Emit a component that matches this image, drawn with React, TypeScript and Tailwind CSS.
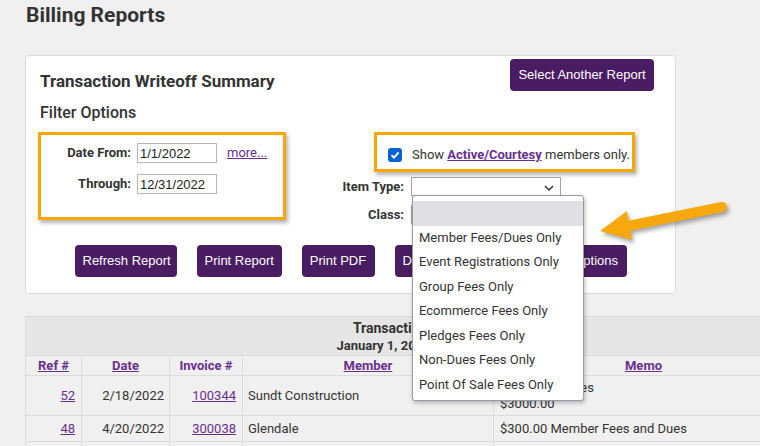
import React from "react";

const btn =
  "h-[32px] px-2 rounded-[4px] bg-[#4a1c62] text-white text-[13px] font-['Liberation_Sans',Arial,sans-serif] leading-[32px] whitespace-nowrap";

const label = "text-[13px] font-bold text-[#333] text-right leading-[20px]";
const link = "text-[#6a2e8f] underline";

const items = [
  "",
  "Member Fees/Dues Only",
  "Event Registrations Only",
  "Group Fees Only",
  "Ecommerce Fees Only",
  "Pledges Fees Only",
  "Non-Dues Fees Only",
  "Point Of Sale Fees Only",
];

function Chevron() {
  return (
    <svg width="10" height="6" viewBox="0 0 10 6" className="absolute right-[6px] top-[7px]">
      <polyline points="1,1 5,5 9,1" fill="none" stroke="#333" strokeWidth="1.5" />
    </svg>
  );
}

export default function App() {
  return (
    <div className="relative w-[760px] h-[446px] overflow-hidden bg-[#f0f0f0] text-[#333] font-['Roboto',sans-serif]">
      <h1 className="pl-[26px] pt-[2px] text-[21px] leading-[26px] font-bold text-[#333]">Billing Reports</h1>

      <div className="mt-[27px] ml-[25px] w-[651px] h-[239px] bg-white border border-[#dcdcdc] rounded-[4px] relative z-10">
        <div className="flex justify-between pl-[14px] pr-[21px] pt-[3px]">
          <div>
            <div className="mt-[12px] text-[17px] leading-[20px] font-bold">Transaction Writeoff Summary</div>
            <div className="mt-[12px] text-[16px] leading-[20px] font-medium">Filter Options</div>
          </div>
          <button className={`${btn} w-[144px] px-0`}>Select Another Report</button>
        </div>

        <div className="flex mt-[9px]">
          <div className="ml-[12px] w-[248px] h-[88px] border-[3px] border-[#f6a800] shadow-[2px_3px_4px_rgba(0,0,0,0.3)]">
            <div className="flex items-center mt-[8px] h-[20px]">
              <div className={`${label} w-[90px]`}>Date From:</div>
              <input
                readOnly
                value="1/1/2022"
                className="ml-[6px] w-[80px] h-[20px] border border-[#b5b5b5] px-[2px] text-[13px] text-[#222] font-['Liberation_Sans',Arial,sans-serif] outline-none"
              />
              <span className={`${link} ml-[10px] text-[13px]`}>more...</span>
            </div>
            <div className="flex items-center mt-[11px] h-[20px]">
              <div className={`${label} w-[90px]`}>Through:</div>
              <input
                readOnly
                value="12/31/2022"
                className="ml-[6px] w-[80px] h-[20px] border border-[#b5b5b5] px-[2px] text-[13px] text-[#222] font-['Liberation_Sans',Arial,sans-serif] outline-none"
              />
            </div>
          </div>

          <div className="ml-[44px]">
            <div className="ml-[44px] w-[261px] h-[40px] border-[3px] border-[#f6a800] shadow-[2px_3px_4px_rgba(0,0,0,0.3)] flex items-center pl-[11px] pt-[6px]">
              <span className="w-[14px] h-[14px] rounded-[3px] bg-[#0b62d6] flex items-center justify-center">
                <svg width="10" height="10" viewBox="0 0 10 10">
                  <polyline points="1.5,5.2 4,7.6 8.6,2.4" fill="none" stroke="#fff" strokeWidth="1.8" />
                </svg>
              </span>
              <span className="ml-[10px] text-[13px] leading-[20px] text-[#333] whitespace-nowrap">
                Show <span className="font-bold text-[#6a2e8f] underline">Active/Courtesy</span> members only.
              </span>
            </div>
            <div className="flex items-center mt-[5px] h-[19px]">
              <div className={`${label} w-[74px]`}>Item Type:</div>
              <div className="relative ml-[7px] w-[150px] h-[19px] border border-[#a3a3a3] bg-white">
                <Chevron />
                <div className="absolute left-[0px] top-[17px] w-[172px] h-[206px] bg-white border border-[#9a9aa4] rounded-[3px] shadow-[1px_2px_4px_rgba(0,0,0,0.25)] pt-[5px] z-20">
                  {items.map((t, i) => (
                    <div
                      key={i}
                      className={`h-[24.5px] leading-[24.5px] pl-[6px] text-[13px] text-[#333] whitespace-nowrap ${
                        i === 0 ? "bg-[#dfdfe4]" : ""
                      }`}
                    >
                      {t}
                    </div>
                  ))}
                </div>
              </div>
            </div>
            <div className="flex items-center mt-[9px] h-[19px]">
              <div className={`${label} w-[74px]`}>Class:</div>
              <div className="relative ml-[7px] w-[150px] h-[19px] border border-[#a3a3a3] bg-white">
                <Chevron />
              </div>
            </div>
          </div>
        </div>

        <div className="flex justify-center gap-[20px] mt-[21px]">
          <button className={`${btn} w-[102px] px-0`}>Refresh Report</button>
          <button className={`${btn} w-[85px] px-0`}>Print Report</button>
          <button className={`${btn} w-[73px] px-0`}>Print PDF</button>
          <button className={`${btn} w-[109px] px-0`}>Download Excel</button>
          <button className={`${btn} w-[103px] px-0`}>Export Options</button>
        </div>
      </div>

      <table className="mt-[22px] ml-[25px] w-[848px] border-collapse text-[13px] text-[#333] table-fixed">
        <colgroup>
          <col className="w-[56px]" />
          <col className="w-[88px]" />
          <col className="w-[73px]" />
          <col className="w-[251px]" />
          <col className="w-[300px]" />
          <col className="w-[80px]" />
        </colgroup>
        <tbody>
          <tr className="h-[39px]">
            <td colSpan={6} className="bg-[#e6e6e6] border border-[#dcdcdc] text-center font-bold align-top pt-[2px]">
              <div className="text-[14px] leading-[18px]">Transaction Writeoff Summary</div>
              <div className="text-[13px] leading-[18px]">January 1, 2022 to December 31, 2022</div>
            </td>
          </tr>
          <tr className="h-[20px] font-bold text-[#6a2e8f] text-center">
            <td className="border border-[#dcdcdc] leading-[19px]"><span className="underline">Ref #</span></td>
            <td className="border border-[#dcdcdc] leading-[19px]"><span className="underline">Date</span></td>
            <td className="border border-[#dcdcdc] leading-[19px]">Invoice #</td>
            <td className="border border-[#dcdcdc] leading-[19px]"><span className="underline">Member</span></td>
            <td className="border border-[#dcdcdc] leading-[19px]"><span className="underline">Memo</span></td>
            <td className="border border-[#dcdcdc] leading-[19px]"><span className="underline">Amount</span></td>
          </tr>
          <tr className="h-[40px]">
            <td className="border border-[#dcdcdc] text-right pr-[6px]"><span className={link}>52</span></td>
            <td className="border border-[#dcdcdc] text-right pr-[5px]">2/18/2022</td>
            <td className="border border-[#dcdcdc] text-right pr-[6px]"><span className={link}>100344</span></td>
            <td className="border border-[#dcdcdc] pl-[5px]">Sundt Construction</td>
            <td className="border border-[#dcdcdc] pl-[6px] leading-[16px]">
              Balance of Dues
              <br />
              $3000.00
            </td>
            <td className="border border-[#dcdcdc] text-right pr-[6px]">$3,000.00</td>
          </tr>
          <tr className="h-[26px]">
            <td className="border border-[#dcdcdc] text-right pr-[6px]"><span className={link}>48</span></td>
            <td className="border border-[#dcdcdc] text-right pr-[5px]">4/20/2022</td>
            <td className="border border-[#dcdcdc] text-right pr-[6px]"><span className={link}>300038</span></td>
            <td className="border border-[#dcdcdc] pl-[5px]">Glendale</td>
            <td className="border border-[#dcdcdc] pl-[6px]">$300.00 Member Fees and Dues</td>
            <td className="border border-[#dcdcdc] text-right pr-[6px]">$300.00</td>
          </tr>
          <tr className="h-[26px]">
            <td className="border border-[#dcdcdc] text-right pr-[6px]"><span className={link}>45</span></td>
            <td className="border border-[#dcdcdc] text-right pr-[5px]">5/2/2022</td>
            <td className="border border-[#dcdcdc] text-right pr-[6px]"><span className={link}>300041</span></td>
            <td className="border border-[#dcdcdc] pl-[5px]">Allied Builders</td>
            <td className="border border-[#dcdcdc] pl-[6px]">$150.00 Member Fees and Dues</td>
            <td className="border border-[#dcdcdc] text-right pr-[6px]">$150.00</td>
          </tr>
        </tbody>
      </table>

      <svg
        width="150"
        height="64"
        viewBox="0 0 150 64"
        className="absolute left-[590px] top-[193px] z-30 drop-shadow-[2px_3px_2px_rgba(0,0,0,0.35)]"
      >
        <line x1="38" y1="33" x2="132" y2="14" stroke="#f7a80c" strokeWidth="10" strokeLinecap="round" />
        <polygon points="10,38 37,18 42,47" fill="#f7a80c" />
      </svg>
    </div>
  );
}
